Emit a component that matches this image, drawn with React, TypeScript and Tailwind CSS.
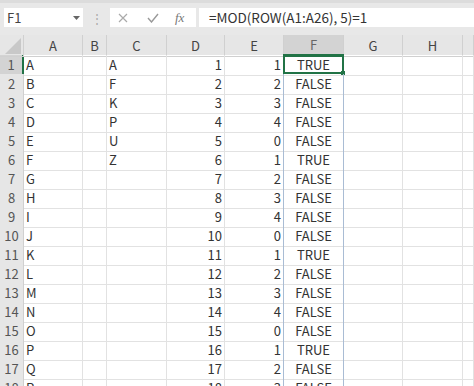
const FONT = "font-['Noto_Sans_CJK_JP','Noto_Sans',sans-serif]";

const COLS = ['A', 'B', 'C', 'D', 'E', 'F', 'G', 'H', ''];
const GRID = 'grid grid-cols-[24px_59px_24px_60px_58px_59px_60px_59px_60px_1fr]';
const C_LIST = ['A', 'F', 'K', 'P', 'U', 'Z'];

function FormulaBar() {
  return (
    <div className="flex h-[35px] items-start gap-0 border-t-[3px] border-[#dcdcdc] bg-[#e8e8e8] pt-[5px]">
      <div className="ml-[4px] flex h-[19px] w-[79px] items-center justify-between bg-white pl-[3px] pr-[3px]">
        <span className="text-[13px] text-[#444]">F1</span>
        <svg width="7" height="4" viewBox="0 0 7 4">
          <path d="M0 0h7L3.5 4z" fill="#666" />
        </svg>
      </div>
      <div className="flex h-[19px] w-[27px] items-center justify-center text-[12px] text-[#aaa]">⋮</div>
      <div className="flex h-[19px] w-[86px] items-center bg-white">
        <svg className="ml-[8px]" width="10" height="10" viewBox="0 0 10 10">
          <path d="M1 1l8 8M9 1l-8 8" stroke="#aaa" strokeWidth="1.2" />
        </svg>
        <svg className="ml-[19px]" width="12" height="10" viewBox="0 0 12 10">
          <path d="M1 5l3.5 4L11 1" stroke="#999" strokeWidth="1.4" fill="none" />
        </svg>
        <span className="ml-[16px] font-['Liberation_Serif',serif] text-[13px] italic text-[#777]">fx</span>
      </div>
      <div className="ml-[3px] flex h-[19px] flex-1 items-center bg-white pl-[10px] text-[13.5px] text-[#333]">
        =MOD(ROW(A1:A26), 5)=1
      </div>
    </div>
  );
}

function HeaderRow() {
  return (
    <div className={`${GRID} h-[20px] bg-[#e6e6e6]`}>
      <div className="relative border-b border-r border-[#d0d0d0]">
        <svg className="absolute bottom-[2px] right-[2px]" width="16" height="16" viewBox="0 0 16 16">
          <path d="M16 0V16H0z" fill="#c8c8c8" />
        </svg>
      </div>
      {COLS.map((c, i) => (
        <div
          key={i}
          className={
            c === 'F'
              ? 'flex items-center justify-center border-b-2 border-r border-b-[#217346] border-r-[#d0d0d0] bg-[#d3d3d3] text-[13px] text-[#666]'
              : 'flex items-center justify-center border-b border-r border-[#d0d0d0] text-[13px] text-[#444]'
          }
        >
          {c}
        </div>
      ))}
    </div>
  );
}

function Row({ n }: { n: number }) {
  const e = n % 5;
  const c = C_LIST[n - 1] ?? '';
  const cell = 'flex items-center border-b border-r border-[#e2e2e2] text-[13px] text-[#333]';
  return (
    <div className={`${GRID} h-[19px]`}>
      <div
        className={
          n === 1
            ? 'flex items-center justify-center border-b border-r-2 border-b-[#d0d0d0] border-r-[#217346] bg-[#d3d3d3] text-[13px] text-[#555]'
            : 'flex items-center justify-center border-b border-r border-[#d0d0d0] bg-[#e6e6e6] text-[13px] text-[#555]'
        }
      >
        {n}
      </div>
      <div className={`${cell} pl-[2px]`}>{String.fromCharCode(64 + n)}</div>
      <div className={cell} />
      <div className={`${cell} pl-[2px]`}>{c}</div>
      <div className={`${cell} justify-end pr-[2px]`}>{n}</div>
      <div className={`${cell} justify-end border-r-[#a9bcd4] pr-[2px]`}>{e}</div>
      <div className={`${cell} relative justify-center border-r-[#a9bcd4]`}>
        {e === 1 ? 'TRUE' : 'FALSE'}
        {n === 1 && (
          <div className="absolute -left-[1px] -top-[1px] h-[20px] w-[61px] border-2 border-[#217346]">
            <div className="absolute -bottom-[3px] -right-[3px] h-[4px] w-[4px] bg-[#217346]" />
          </div>
        )}
      </div>
      <div className={cell} />
      <div className={cell} />
      <div className={cell} />
      <div className={cell} />
    </div>
  );
}

export default function App() {
  return (
    <div className={`${FONT} h-[386px] w-[474px] overflow-hidden bg-white`}>
      <FormulaBar />
      <HeaderRow />
      {Array.from({ length: 18 }, (_, i) => (
        <Row key={i} n={i + 1} />
      ))}
    </div>
  );
}
